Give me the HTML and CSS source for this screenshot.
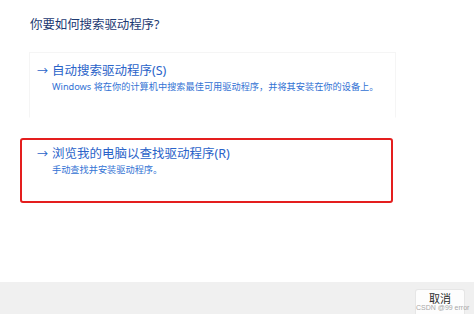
FILE: index.html
```
<!DOCTYPE html>
<html lang="zh-CN">
<head>
<meta charset="utf-8">
<title>更新驱动程序</title>
<link rel="stylesheet" href="styles.css">
</head>
<body>
<div class="dialog">
  <div class="content">
    <h1 class="heading">你要如何搜索驱动程序?</h1>
    <div class="options">
      <div class="option option-auto">
        <span class="arrow">→</span>
        <div class="option-text">
          <div class="option-title">自动搜索驱动程序(S)</div>
          <div class="option-desc">Windows 将在你的计算机中搜索最佳可用驱动程序，并将其安装在你的设备上。</div>
        </div>
      </div>
      <div class="option option-browse">
        <span class="arrow">→</span>
        <div class="option-text">
          <div class="option-title">浏览我的电脑以查找驱动程序(R)</div>
          <div class="option-desc">手动查找并安装驱动程序。</div>
        </div>
      </div>
    </div>
  </div>
  <div class="footer">
    <div class="btn-wrap">
      <button class="btn">取消</button>
      <span class="watermark">CSDN @99 error</span>
    </div>
  </div>
</div>
</body>
</html>
```
FILE: styles.css
```
html, body {
  margin: 0;
  padding: 0;
  background: #ffffff;
}
body {
  font-family: "Noto Sans", "Noto Sans CJK SC", sans-serif;
}
.dialog {
  width: 474px;
  height: 314px;
  display: flex;
  flex-direction: column;
  overflow: hidden;
}
.content {
  flex: 1;
  padding: 16px 0 0 30px;
}
.heading {
  margin: 0;
  font-size: 12.5px;
  line-height: 17px;
  font-weight: 400;
  color: #1d3a72;
  letter-spacing: -0.1px;
}
.options {
  margin: 19px 0 0 -10px;
  display: flex;
  flex-direction: column;
  gap: 20px;
}
.option {
  display: flex;
  align-items: flex-start;
  box-sizing: border-box;
  color: #2a63c9;
}
.option-auto {
  margin-left: 9px;
  width: 367px;
  height: 66px;
  padding: 9px 0 0 7px;
  border: 1px solid #f5f5f5;
  border-bottom-color: transparent;
}
.option-browse {
  width: 373px;
  height: 65px;
  padding: 5px 0 0 15px;
  border: 2px solid #e41e1e;
  border-radius: 3px;
}
.arrow {
  width: 15px;
  font-size: 11px;
  line-height: 18px;
  color: #2a63c9;
}
.option-text {
  white-space: nowrap;
}
.option-title {
  font-size: 12.5px;
  line-height: 18px;
  color: #2a63c9;
}
.option-desc {
  font-size: 9.2px;
  line-height: 13px;
  color: #3272d4;
}
.footer {
  height: 32px;
  background: #f0f0f0;
  display: flex;
  justify-content: flex-end;
  padding-right: 9px;
}
.btn-wrap {
  position: relative;
  margin-top: 7px;
}
.btn {
  display: block;
  width: 50px;
  height: 26px;
  margin: 0;
  padding: 0 0 10px 0;
  border: 1px solid #e6e6e6;
  border-bottom: none;
  border-radius: 3px 3px 0 0;
  background: #fdfdfd;
  font-family: "Noto Sans CJK SC", sans-serif;
  font-size: 11px;
  line-height: 14px;
  color: #2b2b2b;
}
.watermark {
  position: absolute;
  left: 1px;
  top: 15px;
  font-family: "Liberation Sans", sans-serif;
  font-size: 7px;
  line-height: 8px;
  color: #a8a8a8;
  white-space: nowrap;
}
```
